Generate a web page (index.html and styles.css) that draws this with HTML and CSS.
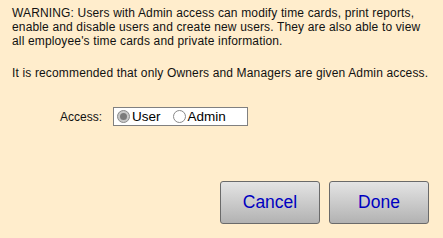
FILE: index.html
```html
<!DOCTYPE html>
<html>
<head>
<meta charset="utf-8">
<link rel="stylesheet" href="styles.css">
</head>
<body>
<div class="page">
  <p class="warn">WARNING: Users with Admin access can modify time cards, print reports, enable and disable users and create new users. They are also able to view all employee's time cards and private information.</p>
  <p class="warn rec">It is recommended that only Owners and Managers are given Admin access.</p>
  <div class="access-row">
    <span class="access-label">Access:</span>
    <div class="radio-box">
      <span class="option"><span class="radio checked"></span><span class="opt-text">User</span></span>
      <span class="option second"><span class="radio"></span><span class="opt-text">Admin</span></span>
    </div>
  </div>
  <div class="actions">
    <button class="btn">Cancel</button>
    <button class="btn">Done</button>
  </div>
</div>
</body>
</html>
```

FILE: styles.css
```css
html, body {
  margin: 0;
  padding: 0;
}
body {
  background: #ffedcc;
  font-family: "Liberation Sans", Arial, sans-serif;
  color: #000;
  width: 443px;
  height: 238px;
  overflow: hidden;
}
.page {
  box-sizing: border-box;
  height: 238px;
  padding: 6px 14px 14px 12px;
  display: flex;
  flex-direction: column;
}
.warn {
  margin: 0;
  font-size: 12px;
  line-height: 14px;
  letter-spacing: 0.15px;
  color: #111;
}
.rec {
  margin-top: 18px;
}
.access-row {
  display: flex;
  align-items: center;
  margin-top: 27px;
  padding-left: 48px;
}
.access-label {
  font-size: 12px;
  line-height: 14px;
  width: 42px;
  margin-right: 11px;
  color: #111;
}
.radio-box {
  box-sizing: border-box;
  width: 135px;
  height: 19px;
  border: 1px solid #808080;
  background: #fff;
  display: flex;
  align-items: center;
  padding-left: 3px;
}
.option {
  display: flex;
  align-items: center;
}
.option.second {
  margin-left: 12px;
}
.radio {
  box-sizing: border-box;
  width: 13px;
  height: 13px;
  border-radius: 50%;
  border: 1px solid #8a8a8a;
  background: #fff;
  position: relative;
}
.radio.checked {
  background: #c8c8c8;
}
.radio.checked::after {
  content: "";
  position: absolute;
  left: 2px;
  top: 2px;
  width: 7px;
  height: 7px;
  border-radius: 50%;
  background: #7a7a7a;
}
.opt-text {
  font-size: 13.5px;
  line-height: 15px;
  margin-left: 2px;
}
.actions {
  margin-top: auto;
  display: flex;
  justify-content: flex-end;
  gap: 9px;
}
.btn {
  box-sizing: border-box;
  width: 100px;
  height: 43px;
  border: 1px solid #6a6a6a;
  border-radius: 3px;
  background: linear-gradient(#e4e4e4, #b2b2b2);
  color: #0000c0;
  font-family: "Liberation Sans", Arial, sans-serif;
  font-size: 17.5px;
  padding: 0;
}
```
